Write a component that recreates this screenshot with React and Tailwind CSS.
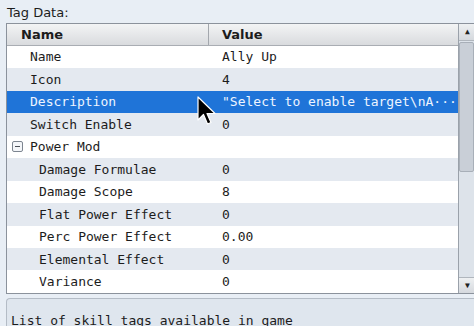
import React from 'react';

const rows = [
  { name: 'Name', value: 'Ally Up' },
  { name: 'Icon', value: '4' },
  { name: 'Description', value: '"Select to enable target\\nA···', selected: true },
  { name: 'Switch Enable', value: '0' },
  { name: 'Power Mod', value: '', group: true },
  { name: 'Damage Formulae', value: '0', sub: true },
  { name: 'Damage Scope', value: '8', sub: true },
  { name: 'Flat Power Effect', value: '0', sub: true },
  { name: 'Perc Power Effect', value: '0.00', sub: true },
  { name: 'Elemental Effect', value: '0', sub: true },
  { name: 'Variance', value: '0', sub: true },
];

function Cursor() {
  return (
    <svg className="absolute left-[197px] top-[96px]" width="20" height="30" viewBox="0 0 20 30">
      <path d="M1 1 L1 24 L6.5 18.5 L10.5 28 L14 26.5 L10 17.5 L18 17.5 Z" fill="#000" stroke="#fff" strokeWidth="1.2" strokeLinejoin="round" />
    </svg>
  );
}

function Row({ row, index }) {
  const bg = row.selected ? 'bg-[#1f74d8]' : index % 2 === 0 ? 'bg-white' : 'bg-[#e4e9f0]';
  const color = row.selected ? 'text-[#eef5ff]' : 'text-[#1c1c1c]';
  return (
    <div className={`flex items-center h-[22.5px] ${bg} ${color}`}>
      <div className="w-[215px] flex items-center">
        {row.group ? (
          <>
            <span className="ml-[5px] w-[11px] h-[11px] border border-[#7d8590] rounded-[2px] flex items-center justify-center bg-[#f4f6f9]">
              <span className="w-[5px] h-px bg-[#4a4f57]" />
            </span>
            <span className="ml-[7px]">{row.name}</span>
          </>
        ) : (
          <span className={row.sub ? 'ml-[32px]' : 'ml-[23px]'}>{row.name}</span>
        )}
      </div>
      <span className="whitespace-pre">{row.value}</span>
    </div>
  );
}

export default function App() {
  return (
    <div className="relative w-[474px] h-[326px] overflow-hidden bg-[#e8eef5] text-[13px] font-['DejaVu_Sans_Mono',monospace]">
      <div className="h-[23px] pl-[7px] pt-[3px] font-['DejaVu_Sans',sans-serif] text-[#1c1c1c]">Tag Data:</div>
      <div className="ml-[6px] h-[271px] border border-r-0 border-[#8b929c] flex bg-white">
        <div className="w-[451px] flex flex-col">
          <div className="flex h-[22px] bg-gradient-to-b from-[#f3f4f5] to-[#d9dbde] border-b border-[#a9adb3] font-['DejaVu_Sans',sans-serif] font-bold text-[#1c1c1c]">
            <div className="w-[202px] pl-[14px] flex items-center border-r border-[#a3a7ad]">Name</div>
            <div className="flex-1 pl-[13px] flex items-center">Value</div>
          </div>
          {rows.map((row, i) => (
            <Row key={row.name} row={row} index={i} />
          ))}
        </div>
        <div className="flex-1 flex flex-col border-l border-[#9aa1aa] bg-[#dde3ea]">
          <div className="h-[17px] flex items-center justify-center bg-gradient-to-b from-[#eef0f2] to-[#d5d9de] border-b border-[#b0b6bd] text-[8px] text-[#222] pl-[2px]">▲</div>
          <div className="h-[130px] mt-px bg-[#c9cfd7] border border-[#a8afb8] rounded-[2px]" />
          <div className="flex-1" />
          <div className="h-[16px] flex items-center justify-center bg-gradient-to-b from-[#eef0f2] to-[#d5d9de] border-t border-[#b0b6bd] text-[8px] text-[#222] pl-[2px]">▼</div>
        </div>
      </div>
      <div className="ml-[6px] mt-[4px] h-[40px] border border-r-0 border-b-0 border-[#b4bcc6] rounded-tl-[4px] bg-[#dfe6ee] pl-[4px] pt-[12px] text-[#1c1c1c]">
        List of skill tags available in game
      </div>
      <Cursor />
    </div>
  );
}
